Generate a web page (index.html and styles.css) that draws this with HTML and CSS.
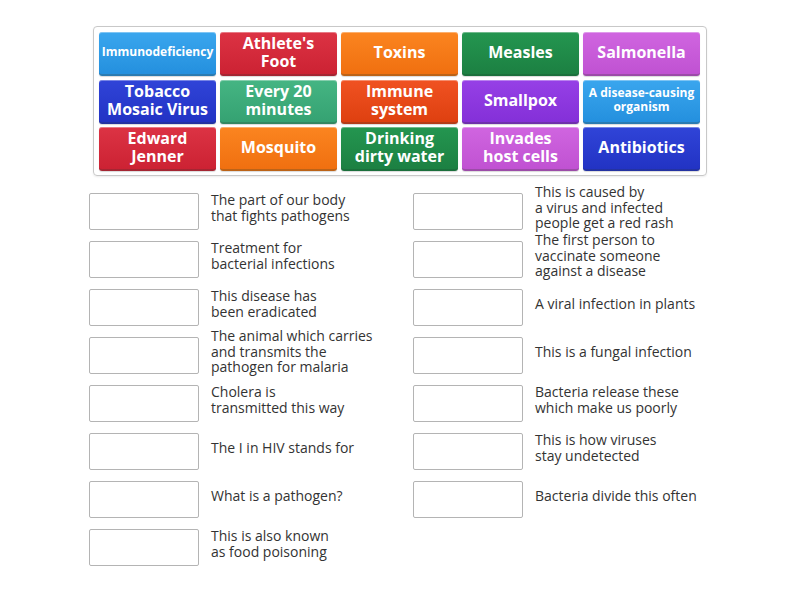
FILE: index.html
```html
<!DOCTYPE html>
<html>
<head>
<meta charset="utf-8">
<link rel="stylesheet" href="styles.css">
</head>
<body>
<div class="bank">
  <div class="tile lblue small">Immunodeficiency</div>
  <div class="tile red">Athlete's<br>Foot</div>
  <div class="tile orange">Toxins</div>
  <div class="tile green">Measles</div>
  <div class="tile violet">Salmonella</div>
  <div class="tile dblue">Tobacco<br>Mosaic Virus</div>
  <div class="tile sea">Every 20<br>minutes</div>
  <div class="tile redorange">Immune<br>system</div>
  <div class="tile purple">Smallpox</div>
  <div class="tile lblue small">A disease-causing<br>organism</div>
  <div class="tile red">Edward<br>Jenner</div>
  <div class="tile orange">Mosquito</div>
  <div class="tile green">Drinking<br>dirty water</div>
  <div class="tile violet">Invades<br>host cells</div>
  <div class="tile dblue">Antibiotics</div>
</div>
<div class="targets">
  <div class="col">
    <div class="row"><div class="box"></div><div class="clue">The part of our body<br>that fights pathogens</div></div>
    <div class="row"><div class="box"></div><div class="clue">Treatment for<br>bacterial infections</div></div>
    <div class="row"><div class="box"></div><div class="clue">This disease has<br>been eradicated</div></div>
    <div class="row"><div class="box"></div><div class="clue">The animal which carries<br>and transmits the<br>pathogen for malaria</div></div>
    <div class="row"><div class="box"></div><div class="clue">Cholera is<br>transmitted this way</div></div>
    <div class="row"><div class="box"></div><div class="clue">The I in HIV stands for</div></div>
    <div class="row"><div class="box"></div><div class="clue">What is a pathogen?</div></div>
    <div class="row"><div class="box"></div><div class="clue">This is also known<br>as food poisoning</div></div>
  </div>
  <div class="col">
    <div class="row"><div class="box"></div><div class="clue">This is caused by<br>a virus and infected<br>people get a red rash</div></div>
    <div class="row"><div class="box"></div><div class="clue">The first person to<br>vaccinate someone<br>against a disease</div></div>
    <div class="row"><div class="box"></div><div class="clue">A viral infection in plants</div></div>
    <div class="row"><div class="box"></div><div class="clue">This is a fungal infection</div></div>
    <div class="row"><div class="box"></div><div class="clue">Bacteria release these<br>which make us poorly</div></div>
    <div class="row"><div class="box"></div><div class="clue">This is how viruses<br>stay undetected</div></div>
    <div class="row"><div class="box"></div><div class="clue">Bacteria divide this often</div></div>
  </div>
</div>
</body>
</html>
```
FILE: styles.css
```css
html, body {
  margin: 0;
  padding: 0;
  background: #fff;
  font-family: "Open Sans", "Liberation Sans", sans-serif;
}
.bank {
  margin: 26px 0 0 93px;
  width: 601px;
  padding: 5px 6px 4px 5px;
  border: 1px solid #c8c8c8;
  border-radius: 4px;
  display: grid;
  grid-template-columns: repeat(5, 117px);
  grid-auto-rows: 44px;
  gap: 3.5px 4px;
  box-shadow: 0 1px 2px rgba(0,0,0,0.08);
}
.tile {
  display: flex;
  align-items: center;
  justify-content: center;
  text-align: center;
  color: #fff;
  font-weight: 700;
  font-size: 16px;
  line-height: 18px;
  border-radius: 3px;
  box-sizing: border-box;
  border-bottom: 2px solid rgba(0,0,0,0.25);
  box-shadow: inset 0 1px 0 rgba(255,255,255,0.35), 0 1px 1px rgba(0,0,0,0.15);
  padding-bottom: 2px;
}
.tile.small {
  font-size: 12px;
  line-height: 14px;
}
.lblue { background: linear-gradient(#3aa6ee, #2490de); }
.red { background: linear-gradient(#dc3344, #cc2233); }
.orange { background: linear-gradient(#fb8520, #f07010); }
.green { background: linear-gradient(#249650, #1c8042); }
.violet { background: linear-gradient(#d065e0, #c052d2); }
.dblue { background: linear-gradient(#3044d8, #2233c4); }
.sea { background: linear-gradient(#45b583, #35a272); }
.redorange { background: linear-gradient(#f05222, #de4010); }
.purple { background: linear-gradient(#9640e6, #8430d8); }

.targets {
  margin: 17px 0 0 89px;
  display: flex;
}
.col {
  width: 324px;
  display: flex;
  flex-direction: column;
  gap: 11px;
}
.row {
  display: flex;
  align-items: center;
  height: 37px;
}
.box {
  width: 110px;
  height: 37px;
  box-sizing: border-box;
  border: 1px solid #b4b4b4;
  border-radius: 2px;
  background: #fff;
  flex: none;
}
.clue {
  margin-left: 12px;
  padding-bottom: 8px;
  font-size: 14px;
  line-height: 15.7px;
  color: #333;
  white-space: nowrap;
}
```
